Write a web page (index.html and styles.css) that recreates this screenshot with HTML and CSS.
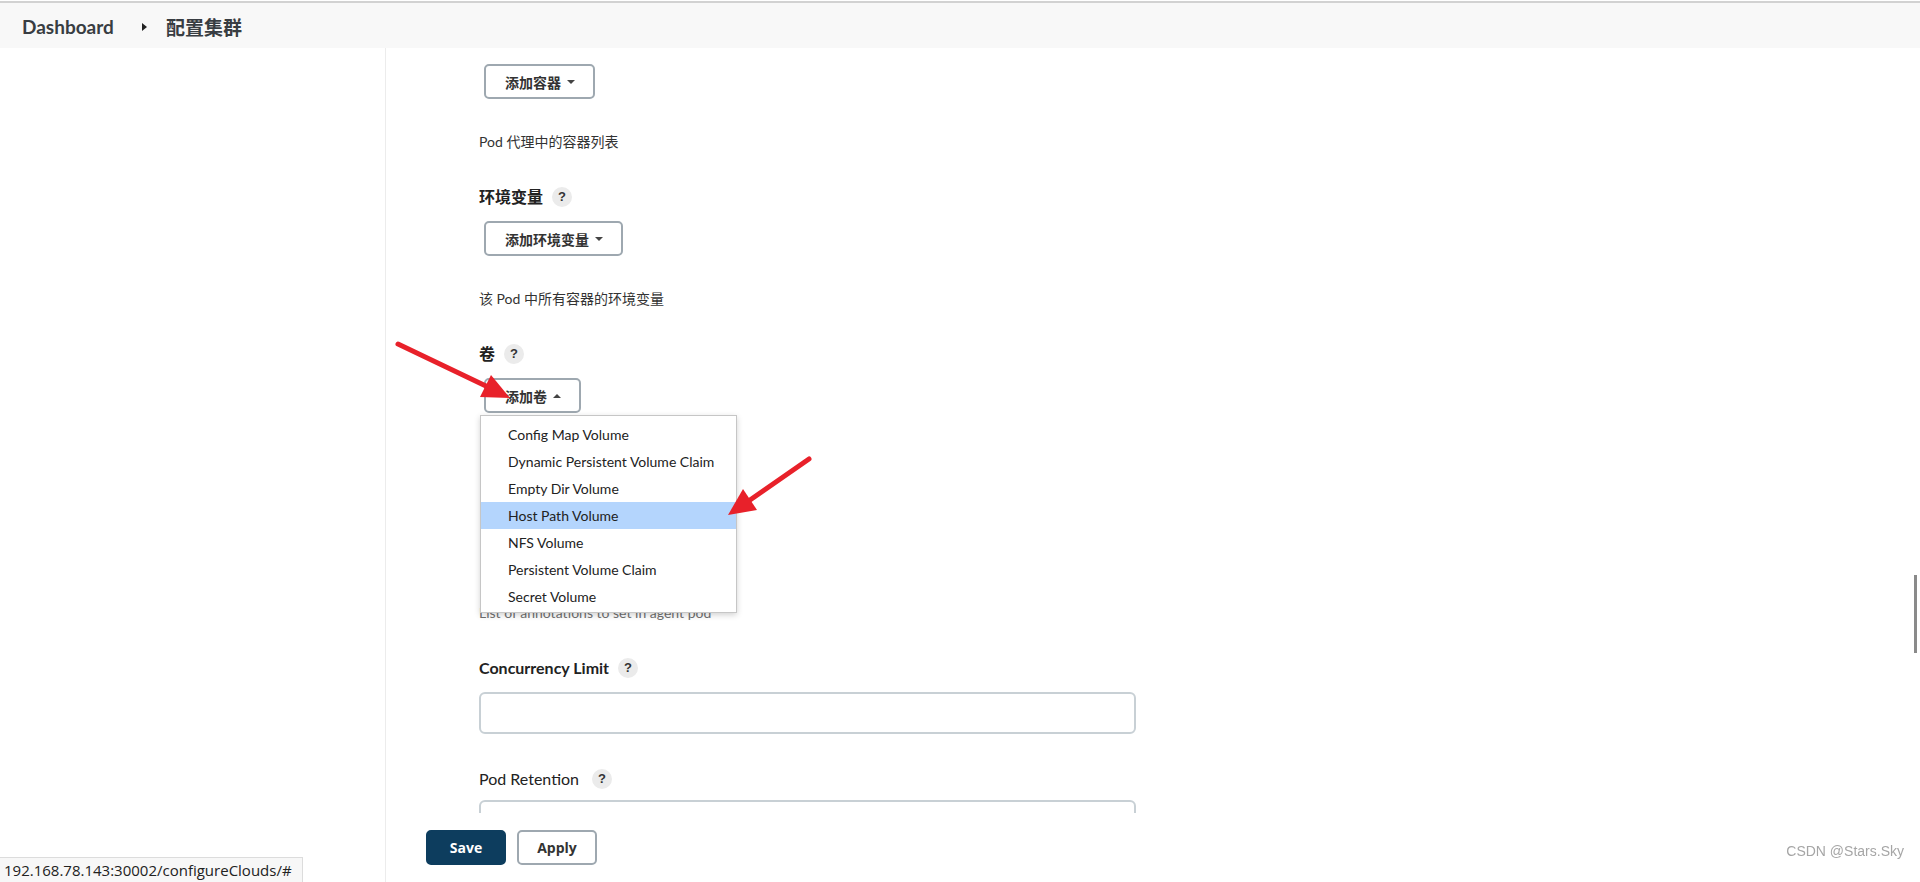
FILE: index.html
```html
<!DOCTYPE html>
<html>
<head>
	<meta charset="utf-8">
	<title>配置集群 [Jenkins]</title>
	<link rel="stylesheet" href="styles.css">
</head>
<body>
<div class="breadcrumbs">
	<a class="crumb" href="#">Dashboard</a>
	<span class="crumb-sep"></span>
	<a class="crumb" href="#">配置集群</a>
</div>

<div class="page">
	<div class="side-panel"></div>
	<div class="main-panel">
		<div class="form-scroll">
			<div class="form-content">
				<div class="setting first">
					<div class="setting-main">
						<button class="add-button">添加容器<span class="caret"></span></button>
					</div>
					<div class="setting-desc">Pod 代理中的容器列表</div>
				</div>

				<div class="setting">
					<div class="setting-name">环境变量<span class="help">?</span></div>
					<div class="setting-main">
						<button class="add-button">添加环境变量<span class="caret"></span></button>
					</div>
					<div class="setting-desc">该 Pod 中所有容器的环境变量</div>
				</div>

				<div class="setting">
					<div class="setting-name">卷<span class="help">?</span></div>
					<div class="setting-main">
						<div class="dropdown-wrap">
							<button class="add-button">添加卷<span class="caret up"></span></button>
							<ul class="dropdown-menu">
								<li>Config Map Volume</li>
								<li>Dynamic Persistent Volume Claim</li>
								<li>Empty Dir Volume</li>
								<li class="active">Host Path Volume</li>
								<li>NFS Volume</li>
								<li>Persistent Volume Claim</li>
								<li>Secret Volume</li>
							</ul>
						</div>
					</div>
					<!-- 被下拉菜单盖住的部分，只留高度 -->
					<div class="setting-desc blank"></div>
				</div>

				<div class="setting">
					<div class="setting-name blank"></div>
					<div class="setting-main">
						<div class="button-blank"></div>
					</div>
					<div class="setting-desc muted">List of annotations to set in agent pod</div>
				</div>

				<div class="setting">
					<div class="setting-name">Concurrency Limit<span class="help">?</span></div>
					<div class="setting-main">
						<input class="text-input" type="text">
					</div>
				</div>

				<div class="setting">
					<div class="setting-name light">Pod Retention<span class="help">?</span></div>
					<div class="setting-main tight">
						<input class="text-input" type="text">
					</div>
				</div>
			</div>
		</div>
		<div class="bottom-sticker">
			<button class="btn btn-primary">Save</button>
			<button class="btn">Apply</button>
		</div>
	</div>
</div>

<div class="status-bar">192.168.78.143:30002/configureClouds/#</div>
<div class="watermark">CSDN @Stars.Sky</div>
<div class="scroll-thumb"></div>

<!-- 标注箭头 -->
<svg class="marks" viewBox="0 0 1920 882" width="1920" height="882">
	<line x1="398" y1="344" x2="488" y2="387" class="mark-line"/>
	<polygon points="510,398 480,397 491,375" class="mark-head"/>
	<line x1="809" y1="459" x2="750" y2="500" class="mark-line"/>
	<polygon points="728,515 743,489 757,510" class="mark-head"/>
</svg>
</body>
</html>
```

FILE: styles.css
```css
*{
	margin:0px;
	padding:0px;
	box-sizing:border-box;
}
html,body{
	width:1920px;
	height:882px;
	overflow:hidden;
	background:#fff;
	font-family:Lato,"Noto Sans CJK SC",sans-serif;
	color:#333;
	font-size:14px;
}
.breadcrumbs{
	margin-top:1px;
	height:47px;
	border-top:2px solid #d2d2d2;
	background:#f8f8f8;
	display:flex;
	align-items:center;
	padding:2px 0 0 22px;
}
.crumb{
	font-size:19px;
	font-weight:700;
	color:#383d42;
	text-decoration:none;
}
.crumb-sep{
	width:0;
	height:0;
	border-top:4px solid transparent;
	border-bottom:4px solid transparent;
	border-left:5px solid #222;
	margin:0 19px 0 28px;
}
.page{
	display:flex;
	height:834px;
}
.side-panel{
	width:386px;
	border-right:1px solid #ececec;
	flex-shrink:0;
}
.main-panel{
	flex:1;
	display:flex;
	flex-direction:column;
}
.form-scroll{
	flex:1;
	overflow:hidden;
	padding:16px 0 0 93px;
}
.form-content{
	width:657px;
}
.setting{
	margin-top:33px;
}
.setting.first{
	margin-top:0;
}
.setting-name{
	height:24px;
	line-height:24px;
	font-size:16px;
	font-weight:700;
	color:#222;
	display:flex;
	align-items:center;
}
.setting-name.light{
	font-weight:400;
}
.setting-name.light .help{
	margin-left:13px;
}
.help{
	width:20px;
	height:20px;
	border-radius:10px;
	background:#ebebeb;
	margin-left:9px;
	font-size:13px;
	font-weight:700;
	line-height:20px;
	text-align:center;
	color:#333;
	font-family:"Liberation Sans",sans-serif;
}
.setting-main{
	margin-top:12px;
}
.setting.first .setting-main{
	margin-top:0;
}
.setting-main.tight{
	margin-top:9px;
}
.setting-desc{
	margin-top:33px;
	line-height:20px;
	font-size:14px;
	color:#333;
}
.setting-desc.blank{
	height:20px;
}
.setting-desc.muted{
	color:#6f6f6f;
}
.button-blank{
	height:35px;
}
.add-button{
	height:35px;
	margin-left:5px;
	padding:0 18px 0 19px;
	border:2px solid #9ea8b0;
	border-radius:5px;
	background:#fff;
	font-family:Lato,"Noto Sans CJK SC",sans-serif;
	font-size:14px;
	font-weight:600;
	color:#333;
	display:inline-flex;
	align-items:center;
	cursor:pointer;
}
.caret{
	width:0;
	height:0;
	border-left:4px solid transparent;
	border-right:4px solid transparent;
	border-top:4px solid #444;
	margin-left:6px;
}
.caret.up{
	border-top:0;
	border-bottom:4px solid #444;
}
.dropdown-wrap{
	position:relative;
	display:inline-block;
}
.dropdown-menu{
	position:absolute;
	top:37px;
	left:1px;
	width:257px;
	list-style:none;
	background:#fff;
	border:1px solid #c6c6c6;
	box-shadow:0 2px 6px rgba(0,0,0,0.18);
	padding:5px 0 2px;
	z-index:10;
}
.dropdown-menu li{
	height:27px;
	line-height:27px;
	padding-left:27px;
	font-size:14px;
	color:#222;
	white-space:nowrap;
}
.dropdown-menu li.active{
	background:#b4d5fd;
}
.text-input{
	display:block;
	width:657px;
	height:42px;
	border:2px solid #c8d0d5;
	border-radius:6px;
	background:#fff;
}
.bottom-sticker{
	height:69px;
	background:#fff;
	padding:17px 0 0 40px;
	display:flex;
	gap:11px;
	align-items:flex-start;
}
.btn{
	width:80px;
	height:35px;
	border:2px solid #9ea8b0;
	border-radius:5px;
	background:#fff;
	font-family:"Open Sans",sans-serif;
	font-size:14px;
	font-weight:700;
	color:#333;
	cursor:pointer;
}
.btn-primary{
	background:#0d3d5e;
	border-color:#0d3d5e;
	color:#fff;
}
.status-bar{
	position:fixed;
	left:0;
	bottom:0;
	width:303px;
	height:25px;
	background:#f7f7f7;
	border-top:1px solid #dcdcdc;
	border-right:1px solid #dcdcdc;
	padding-left:4px;
	font-family:"Open Sans",sans-serif;
	font-size:15px;
	line-height:24px;
	color:#222;
	white-space:nowrap;
	overflow:hidden;
}
.watermark{
	position:fixed;
	right:16px;
	bottom:23px;
	font-family:"Liberation Sans",sans-serif;
	font-size:14px;
	color:#a6a6a6;
}
.scroll-thumb{
	position:fixed;
	left:1914px;
	top:575px;
	width:3px;
	height:78px;
	background:#8a8a8a;
}
.marks{
	position:fixed;
	left:0;
	top:0;
	pointer-events:none;
	z-index:20;
}
.mark-line{
	stroke:#e8212a;
	stroke-width:5;
	stroke-linecap:round;
}
.mark-head{
	fill:#e8212a;
}
```
